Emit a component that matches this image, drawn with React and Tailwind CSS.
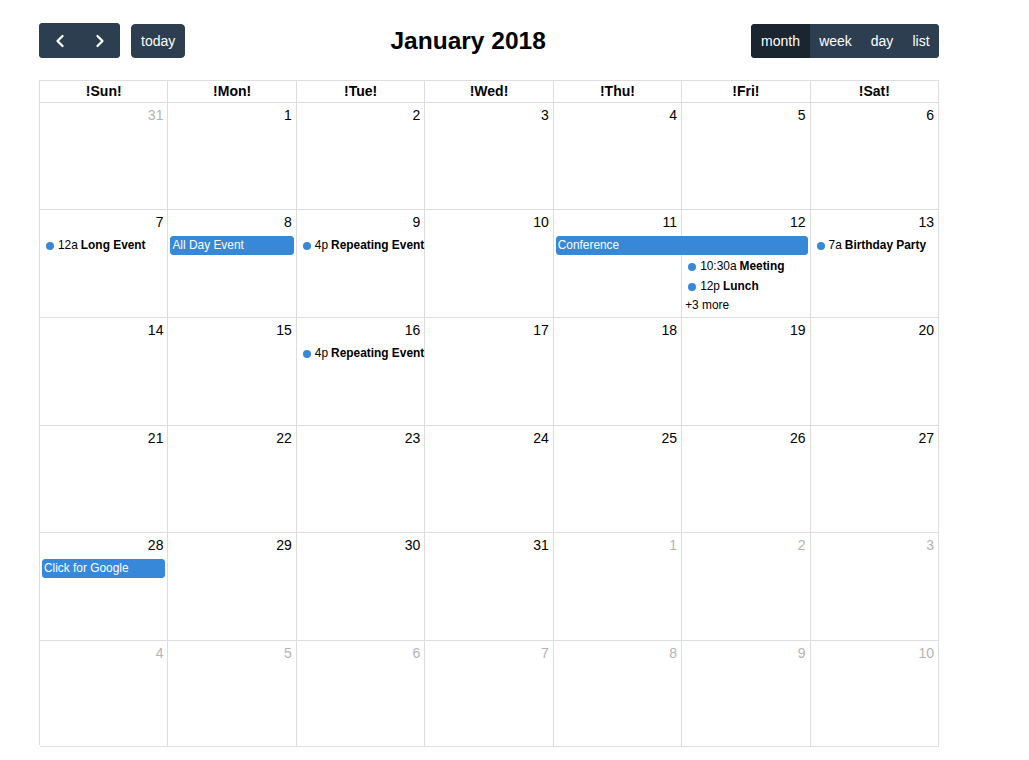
import React from 'react';
import { ChevronLeft, ChevronRight } from 'lucide-react';

const colStart = ['', 'col-start-1', 'col-start-2', 'col-start-3', 'col-start-4', 'col-start-5', 'col-start-6', 'col-start-7'];
const rowStart = ['', 'row-start-1', 'row-start-2', 'row-start-3', 'row-start-4', 'row-start-5'];
const weekHeights = ['h-[107px]', 'h-[108px]', 'h-[108px]', 'h-[107px]', 'h-[108px]', 'h-[104px]'];

const dayNames = ['!Sun!', '!Mon!', '!Tue!', '!Wed!', '!Thu!', '!Fri!', '!Sat!'];

const weeks = [
  { days: [[31, true], [1], [2], [3], [4], [5], [6]], events: [] },
  {
    days: [[7], [8], [9], [10], [11], [12], [13]],
    events: [
      { col: 1, row: 2, type: 'dot', time: '12a', title: 'Long Event' },
      { col: 2, row: 2, type: 'block', title: 'All Day Event' },
      { col: 3, row: 2, type: 'dot', time: '4p', title: 'Repeating Event' },
      { col: 5, row: 2, span: true, type: 'block', title: 'Conference' },
      { col: 7, row: 2, type: 'dot', time: '7a', title: 'Birthday Party' },
      { col: 6, row: 3, type: 'dot', time: '10:30a', title: 'Meeting' },
      { col: 6, row: 4, type: 'dot', time: '12p', title: 'Lunch' },
      { col: 6, row: 5, type: 'more', title: '+3 more' },
    ],
  },
  {
    days: [[14], [15], [16], [17], [18], [19], [20]],
    events: [{ col: 3, row: 2, type: 'dot', time: '4p', title: 'Repeating Event' }],
  },
  { days: [[21], [22], [23], [24], [25], [26], [27]], events: [] },
  {
    days: [[28], [29], [30], [31], [1, true], [2, true], [3, true]],
    events: [{ col: 1, row: 2, type: 'block', title: 'Click for Google' }],
  },
  { days: [[4, true], [5, true], [6, true], [7, true], [8, true], [9, true], [10, true]], events: [] },
];

function Event({ ev }) {
  const place = `${colStart[ev.col]} ${rowStart[ev.row]} ${ev.span ? 'col-span-2' : ''}`;
  if (ev.type === 'block') {
    return (
      <div className={`${place} ml-[2px] mr-[3px] h-[19px] self-start rounded-[3px] border border-[#3788d8] bg-[#3788d8] px-[1px] text-[11.9px] leading-[17px] text-white whitespace-nowrap overflow-hidden`}>
        {ev.title}
      </div>
    );
  }
  if (ev.type === 'more') {
    return (
      <div className={`${place} ml-[3px] flex items-center text-[11.9px] text-black`}>
        {ev.title}
      </div>
    );
  }
  return (
    <div className={`${place} ml-[2px] flex h-[19px] items-center self-start overflow-hidden whitespace-nowrap text-[11.9px] text-black`}>
      <span className="mx-[4px] h-[8px] w-[8px] shrink-0 rounded-full bg-[#3788d8]" />
      <span>{ev.time}</span>
      <span className="ml-[3px] font-bold">{ev.title}</span>
    </div>
  );
}

function Week({ week, height }) {
  return (
    <div className={`grid grid-cols-7 grid-rows-[26px_21px_20px_19px_20px_1fr] ${height}`}>
      {week.days.map((d, i) => (
        <div key={'c' + i} className={`${colStart[i + 1]} row-span-full border-r border-b border-[#ddd]`} />
      ))}
      {week.days.map(([n, other], i) => (
        <div
          key={'n' + i}
          className={`${colStart[i + 1]} row-start-1 pr-[5px] pt-[4px] text-right text-[14px] leading-[16px] ${other ? 'text-[#b3b3b3]' : 'text-black'}`}
        >
          {n}
        </div>
      ))}
      {week.events.map((ev, i) => (
        <Event key={'e' + i} ev={ev} />
      ))}
    </div>
  );
}

export default function App() {
  return (
    <div className="min-h-[760px] bg-white pl-[39px] pt-[23px] font-['Liberation_Sans',Arial,sans-serif] text-[14px]">
      <div className="w-[900px]">
        <div className="mb-[22px] flex items-center justify-between">
          <div className="flex items-center">
            <div className="flex h-[35px] overflow-hidden rounded-[4px]">
              <button className="flex w-[41px] items-center justify-center border border-[#2c3e50] bg-[#2c3e50] text-white">
                <ChevronLeft size={20} strokeWidth={2.75} />
              </button>
              <button className="flex w-[40px] items-center justify-center border border-[#2c3e50] bg-[#2c3e50] text-white">
                <ChevronRight size={20} strokeWidth={2.75} />
              </button>
            </div>
            <button className="ml-[11px] h-[34px] rounded-[4px] border border-[#2c3e50] bg-[#2c3e50] px-[9px] pt-[1px] text-[14px] text-white">
              today
            </button>
          </div>
          <h2 className="pt-[2px] text-[24.5px] font-bold leading-none text-black">January 2018</h2>
          <div className="flex h-[34px] overflow-hidden rounded-[4px] text-[14px] text-white">
            <button className="w-[59px] border border-[#1a252f] bg-[#1a252f] pt-[1px]">month</button>
            <button className="w-[51px] border border-[#2c3e50] bg-[#2c3e50] pt-[1px]">week</button>
            <button className="w-[42px] border border-[#2c3e50] bg-[#2c3e50] pt-[1px]">day</button>
            <button className="w-[36px] border border-[#2c3e50] bg-[#2c3e50] pt-[1px]">list</button>
          </div>
        </div>

        <div className="border-l border-t border-[#ddd]">
          <div className="grid grid-cols-7">
            {dayNames.map((d) => (
              <div key={d} className="border-r border-b border-[#ddd] py-[2px] text-center text-[14px] font-bold leading-[17px] text-black">
                {d}
              </div>
            ))}
          </div>
          {weeks.map((w, i) => (
            <Week key={i} week={w} height={weekHeights[i]} />
          ))}
        </div>
      </div>
    </div>
  );
}
